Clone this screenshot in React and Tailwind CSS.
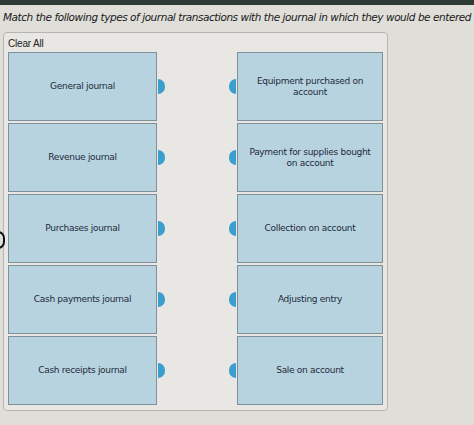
const pairs = [
  ['General journal', 'Equipment purchased on account'],
  ['Revenue journal', 'Payment for supplies bought on account'],
  ['Purchases journal', 'Collection on account'],
  ['Cash payments journal', 'Adjusting entry'],
  ['Cash receipts journal', 'Sale on account'],
];

function Card({ label, className }) {
  return (
    <div
      className={`h-[69px] flex items-center justify-center px-[10px] text-center border border-[#7f909a] bg-[#b8d3e0] text-[9px] tracking-[-0.3px] leading-[11px] text-[#1c2a3a] ${className}`}
    >
      {label}
    </div>
  );
}

export default function App() {
  return (
    <div
      className="w-[474px] h-[425px] overflow-hidden bg-[#dfded9] relative"
      style={{ fontFamily: '"DejaVu Sans", Verdana, sans-serif' }}
    >
      <div className="h-[5px] bg-[#2e3b35]" />
      <p className="pl-[3px] pt-[6px] text-[10.5px] tracking-[-0.45px] italic whitespace-nowrap text-[#1a1a1a] leading-[13px]">
        Match the following types of journal transactions with the journal in which they would be entered
      </p>

      <div className="ml-[3px] mt-[8px] w-[385px] border border-[#b5b5b1] bg-[#e8e7e3] rounded-sm pb-[5px]">
        <div
          className="px-[4px] pt-[3px] h-[19px] text-[10px] tracking-[-0.2px] text-[#222]"
          style={{ fontFamily: '"Liberation Sans", Arial, sans-serif' }}
        >
          Clear All
        </div>
        <div className="flex flex-col gap-[2px] pl-[4px]">
          {pairs.map(([left, right]) => (
            <div key={left} className="flex items-center">
              <Card label={left} className="w-[149px]" />
              <div className="flex-1 flex items-center justify-between px-[1px]">
                <span className="block w-[7px] h-[15px] rounded-r-full bg-[#3a9fcf]" />
                <span className="block w-[7px] h-[15px] rounded-l-full bg-[#3a9fcf]" />
              </div>
              <Card label={right} className="w-[146px] mr-[4px]" />
            </div>
          ))}
        </div>
      </div>

      {/* partial radio ring at the left edge */}
      <span className="absolute left-[-9px] top-[231px] w-[14px] h-[18px] rounded-full border-2 border-[#111]" />
    </div>
  );
}
